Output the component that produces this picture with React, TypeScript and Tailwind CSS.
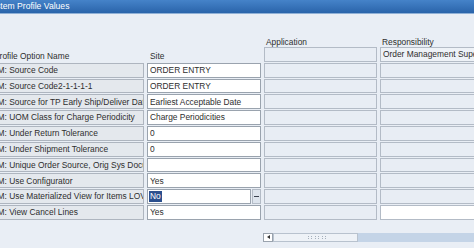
import React from "react";

type Row = { label: string; site: string; selected?: boolean; lastWhite?: boolean };

const rows: Row[] = [
  { label: "OM: Source Code", site: "ORDER ENTRY" },
  { label: "OM: Source Code2-1-1-1-1", site: "ORDER ENTRY" },
  { label: "OM: Source for TP Early Ship/Deliver Date", site: "Earliest Acceptable Date" },
  { label: "OM: UOM Class for Charge Periodicity", site: "Charge Periodicities" },
  { label: "OM: Under Return Tolerance", site: "0" },
  { label: "OM: Under Shipment Tolerance", site: "0" },
  { label: "OM: Unique Order Source, Orig Sys Document Ref", site: "" },
  { label: "OM: Use Configurator", site: "Yes" },
  { label: "OM: Use Materialized View for Items LOV", site: "No", selected: true },
  { label: "OM: View Cancel Lines", site: "Yes", lastWhite: true },
];

const gridCols = "grid grid-cols-[156px_114px_113px_120px] gap-x-[3px] ml-[-12px]";

export default function App() {
  return (
    <div
      className="w-[474px] h-[248px] overflow-hidden bg-[#e9eef5] text-[#2e2e2e] flex flex-col"
      style={{ fontFamily: '"Liberation Sans", Arial, sans-serif' }}
    >
      {/* title bar */}
      <div className="h-[14px] shrink-0 bg-gradient-to-b from-[#4583c9] to-[#2a64aa] border-b border-[#8fb0d6] flex items-center">
        <span className="ml-[-14px] text-white text-[8.6px] leading-none whitespace-nowrap">
          System Profile Values
        </span>
      </div>

      {/* column headers (Application / Responsibility) */}
      <div className={`${gridCols} mt-[22px] h-[11px] items-end text-[8.4px] leading-none`}>
        <div />
        <div />
        <div className="pl-[2px] pb-[1px] whitespace-nowrap">Application</div>
        <div className="pl-[2px] pb-[1px] whitespace-nowrap">Responsibility</div>
      </div>

      <div className="flex flex-col gap-y-[1px] text-[8.4px] leading-none">
        {/* context row */}
        <div className={`${gridCols} h-[14.8px]`}>
          <div className="flex items-end pl-[6px] pb-[1px] whitespace-nowrap">Profile Option Name</div>
          <div className="flex items-end pl-[3px] pb-[1px]">Site</div>
          <div className="border border-[#b3bbc6] bg-[#e8edf4]" />
          <div className="border border-[#b3bbc6] bg-[#eef2f7] flex items-center pl-[2px] whitespace-nowrap overflow-hidden">
            Order Management Super User
          </div>
        </div>

        {rows.map((r) => (
          <div key={r.label} className={`${gridCols} h-[14.8px]`}>
            <div className="border border-[#aeb5bf] bg-[#e4e8ed] flex items-center pl-[2px] whitespace-nowrap overflow-hidden">
              {r.label}
            </div>
            {r.selected ? (
              <div className="flex gap-x-[1px]">
                <div className="flex-1 border border-[#9aa3ae] bg-white flex items-center pl-[1px] overflow-hidden">
                  <span className="bg-[#2b4f8e] text-white px-[1px] py-[1px]">{r.site}</span>
                </div>
                <div className="w-[9px] border border-[#b3bbc6] bg-[#dde4ed] flex items-center justify-center">
                  <div className="w-[5px] h-[1.5px] bg-[#3a4250]" />
                </div>
              </div>
            ) : (
              <div className="border border-[#9aa3ae] bg-white flex items-center pl-[2px] whitespace-nowrap overflow-hidden">
                {r.site}
              </div>
            )}
            <div className="border border-[#b3bbc6] bg-[#e8edf4]" />
            <div className={`border border-[#b3bbc6] ${r.lastWhite ? "bg-white" : "bg-[#e8edf4]"}`} />
          </div>
        ))}
      </div>

      {/* horizontal scrollbar */}
      <div className="flex mt-[13px] ml-[263px] h-[9px]">
        <div className="w-[10px] border border-[#9aa3ae] bg-white flex items-center justify-center">
          <div className="w-0 h-0 border-y-[2.5px] border-y-transparent border-r-[3px] border-r-[#333]" />
        </div>
        <div className="w-[85px] border border-[#b8c2ce] bg-[#eef2f7] flex items-center justify-center pl-[4px]">
          <div className="flex gap-x-[1.5px]">
            {[0, 1, 2, 3, 4, 5].map((i) => (
              <div key={i} className="w-[2px] h-[3px] border-l border-dotted border-[#a6b0bc]" />
            ))}
          </div>
        </div>
        <div className="flex-1 bg-[#c4d4e7]" />
      </div>
    </div>
  );
}
